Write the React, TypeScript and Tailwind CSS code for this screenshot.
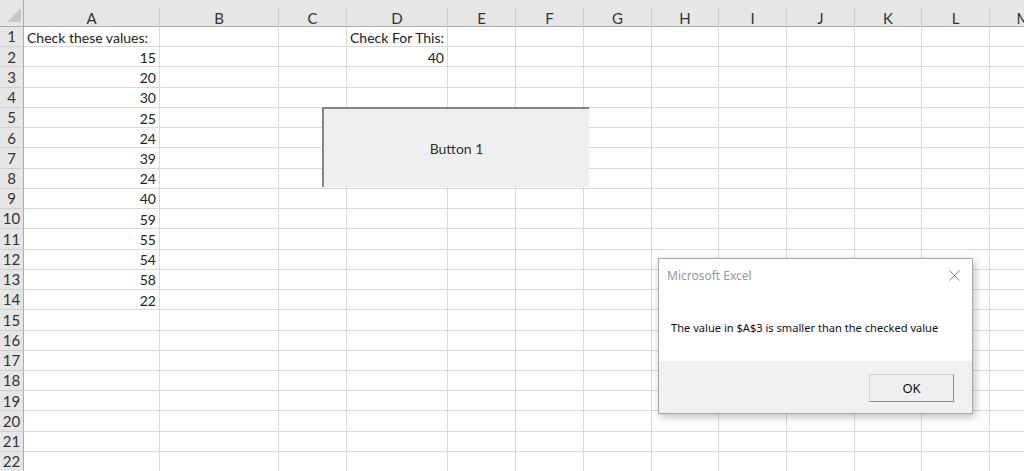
import React from "react";

const cols = ["A", "B", "C", "D", "E", "F", "G", "H", "I", "J", "K", "L", "M"];

const values: Record<number, number> = {
  2: 15, 3: 20, 4: 30, 5: 25, 6: 24, 7: 39, 8: 24, 9: 40, 10: 59, 11: 55, 12: 54, 13: 58, 14: 22,
};

function cellContent(row: number, col: string) {
  if (col === "A" && row === 1) return <span className="pl-[3px] whitespace-nowrap">Check these values:</span>;
  if (col === "A" && values[row] !== undefined)
    return <span className="ml-auto pr-[3px]">{values[row]}</span>;
  if (col === "D" && row === 1) return <span className="pl-[3px] whitespace-nowrap">Check For This:</span>;
  if (col === "D" && row === 2) return <span className="ml-auto pr-[3px]">40</span>;
  return null;
}

export default function App() {
  const rows = Array.from({ length: 22 }, (_, i) => i + 1);

  return (
    <div className="relative h-[471px] w-[1024px] overflow-hidden bg-white font-['Lato',sans-serif] text-[15px] text-[#222]">
      <div className="grid w-[1058px] grid-cols-[24px_136px_119px_68px_101px_68px_68px_68px_67px_68px_68px_67px_68px_68px] grid-rows-[27px_repeat(22,20.24px)]">
        {/* corner */}
        <div className="flex items-end justify-end border-b border-r border-[#ababab] bg-[#e6e6e6] pb-[4px] pr-[2px]">
          <svg width="14" height="14" viewBox="0 0 14 14">
            <polygon points="14,0 14,14 0,14" fill="#c6c6c6" />
          </svg>
        </div>
        {cols.map((c) => (
          <div key={c} className="flex flex-col border-b border-[#ababab] bg-[#e6e6e6] pt-[7px]">
            <div className="flex flex-1 items-center justify-center border-r border-[#cdcdcd] text-[#333]">
              {c}
            </div>
          </div>
        ))}

        {rows.map((r) => (
          <React.Fragment key={r}>
            <div className="flex items-center justify-center border-b border-r border-[#ababab] border-b-[#cfcfcf] bg-[#e6e6e6] text-[#333]">
              {r}
            </div>
            {cols.map((c) => (
              <div key={c} className="flex items-center overflow-visible border-b border-r border-[#dadada] pt-[2px] text-[14px] leading-none">
                {cellContent(r, c)}
              </div>
            ))}
          </React.Fragment>
        ))}
      </div>

      {/* form button */}
      <div className="absolute left-[322px] top-[107px] flex h-[80px] w-[267px] items-center justify-center border-l-2 border-t-2 border-[#858585] bg-[#efefef] pt-[1px] text-[14px] text-[#333]">
        Button 1
      </div>

      {/* message box */}
      <div className="absolute left-[658px] top-[258px] flex h-[156px] w-[315px] flex-col border border-[#a8a8a8] bg-white font-['Noto_Sans',sans-serif] text-[11.1px] shadow-[2px_3px_8px_rgba(0,0,0,0.25)]">
        <div className="flex h-[33px] items-center justify-between pl-[8px] pr-[12px]">
          <span className="text-[12px] text-[#999]">Microsoft Excel</span>
          <svg width="11" height="11" viewBox="0 0 11 11" stroke="#888" strokeWidth="1">
            <line x1="0.5" y1="0.5" x2="10.5" y2="10.5" />
            <line x1="10.5" y1="0.5" x2="0.5" y2="10.5" />
          </svg>
        </div>
        <div className="flex flex-1 items-center pl-[12px] pt-[4px] text-[#111]">
          The value in $A$3 is smaller than the checked value
        </div>
        <div className="flex h-[52px] justify-end bg-[#f0f0f0] pr-[18px] pt-[13px]">
          <div className="flex h-[28px] w-[85px] items-center justify-center border border-[#cfcfcf] border-b-[#8c8c8c] border-r-[#8c8c8c] bg-[#efefef] pt-[2px] text-[13px] text-[#111]">
            OK
          </div>
        </div>
      </div>
    </div>
  );
}
